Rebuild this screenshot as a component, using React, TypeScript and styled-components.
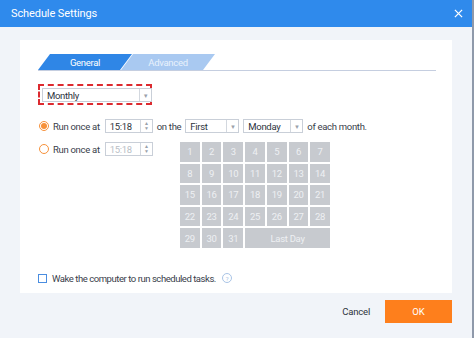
import styled, { createGlobalStyle } from "styled-components";

const GlobalStyle = createGlobalStyle`
  html, body {
    margin: 0;
    padding: 0;
    background: #ffffff;
  }
  body {
    font-family: Roboto, "Liberation Sans", sans-serif;
    font-size: 9.5px;
    letter-spacing: -0.3px;
    color: #333a44;
  }
`;

const Window = styled.div`
  width: 472px;
  height: 338px;
  border-right: 2px solid #8f99aa;
  background: #f1f4f9;
  display: flex;
  flex-direction: column;
`;

const TitleBar = styled.div`
  height: 27px;
  flex-shrink: 0;
  background: #2f8aec;
  color: #ffffff;
  display: flex;
  align-items: center;
  justify-content: space-between;
  padding: 0 9px 0 11px;
  font-size: 11px;
  letter-spacing: -0.1px;
`;

const CloseIcon = styled.svg`
  width: 9px;
  height: 9px;
`;

const Body = styled.div`
  padding: 13px 20px 0 20px;
`;

const Panel = styled.div`
  background: #ffffff;
  height: 253px;
  box-sizing: border-box;
  padding: 14px 16px 0 18px;
  display: flex;
  flex-direction: column;
`;

const TabRow = styled.div`
  display: flex;
  height: 16px;
  border-bottom: 1px solid #c5cee0;
`;

const Tab = styled.div<{ $active?: boolean }>`
  width: 94px;
  height: 16px;
  margin-left: ${({ $active }) => ($active ? "0" : "-11px")};
  clip-path: polygon(12px 0, 100% 0, calc(100% - 12px) 100%, 0 100%);
  background: ${({ $active }) => ($active ? "#2f86e6" : "#a9c9f1")};
  color: ${({ $active }) => ($active ? "#ffffff" : "#e8f1fc")};
  display: flex;
  align-items: center;
  justify-content: center;
  font-size: 9.5px;
`;

const DashedBox = styled.div`
  margin-top: 13px;
  width: 114px;
  height: 21px;
  box-sizing: border-box;
  border: 2px dashed #dc2a2f;
  padding: 2px;
`;

const Select = styled.div<{ $width: number; $disabled?: boolean }>`
  width: ${({ $width }) => $width}px;
  height: 14px;
  box-sizing: border-box;
  border: 1px solid #c9cfd8;
  background: #ffffff;
  display: flex;
  align-items: center;
  color: ${({ $disabled }) => ($disabled ? "#b9bec6" : "#2d333c")};
`;

const SelectText = styled.span`
  flex: 1;
  padding-left: 4px;
  white-space: nowrap;
`;

const Arrow = styled.span`
  width: 11px;
  height: 100%;
  border-left: 1px solid #d3d8df;
  display: flex;
  align-items: center;
  justify-content: center;
  color: #9aa1ab;
  font-size: 6px;
`;

const Spinner = styled.span`
  width: 11px;
  height: 100%;
  border-left: 1px solid #d3d8df;
  display: flex;
  flex-direction: column;
  align-items: center;
  justify-content: center;
  color: #9aa1ab;
  font-size: 5px;
  line-height: 5px;
`;

const OptionRow = styled.div`
  display: flex;
  align-items: center;
  gap: 4px;
  height: 14px;
`;

const FirstRow = styled(OptionRow)`
  margin-top: 14px;
`;

const Radio = styled.span<{ $checked?: boolean }>`
  width: 10px;
  height: 10px;
  box-sizing: border-box;
  border-radius: 50%;
  border: 1px solid #f7913a;
  margin-left: 1px;
  display: flex;
  align-items: center;
  justify-content: center;
  &::after {
    content: "";
    width: 6px;
    height: 6px;
    border-radius: 50%;
    background: ${({ $checked }) => ($checked ? "#f7913a" : "transparent")};
  }
`;

const Label = styled.span`
  white-space: nowrap;
  color: #39404a;
`;

const RadioLabel = styled(Label)`
  margin-right: 1px;
`;

const WakeLabel = styled(Label)`
  letter-spacing: -0.45px;
`;

const LowerArea = styled.div`
  display: flex;
  margin-top: 9px;
`;

const LeftCol = styled.div`
  width: 142px;
`;

const Calendar = styled.div`
  width: 150px;
  display: grid;
  grid-template-columns: repeat(7, 1fr);
  grid-auto-rows: 19.6px;
  gap: 2px;
`;

const Day = styled.div<{ $span?: number }>`
  grid-column: span ${({ $span }) => $span ?? 1};
  background: #c7cacf;
  color: #eef0f3;
  display: flex;
  align-items: center;
  justify-content: center;
  font-size: 9.5px;
`;

const WakeRow = styled.div`
  margin-top: 25px;
  display: flex;
  align-items: center;
  gap: 4px;
`;

const Checkbox = styled.span`
  width: 9px;
  height: 9px;
  box-sizing: border-box;
  border: 1px solid #4a8de0;
  margin-right: 1px;
`;

const HelpIcon = styled.span`
  width: 8px;
  height: 8px;
  border-radius: 50%;
  border: 1px solid #a9c4e6;
  color: #a9c4e6;
  font-size: 6px;
  display: flex;
  align-items: center;
  justify-content: center;
  margin-left: 2px;
`;

const Footer = styled.div`
  display: flex;
  justify-content: flex-end;
  align-items: center;
  padding: 7px 20px 0 0;
  gap: 15px;
`;

const CancelButton = styled.button`
  border: none;
  background: transparent;
  font: inherit;
  font-size: 9.5px;
  letter-spacing: -0.2px;
  color: #2d333c;
  padding: 0;
  cursor: pointer;
`;

const OkButton = styled.button`
  width: 67px;
  height: 23px;
  border: none;
  background: #fe7f1c;
  color: #ffffff;
  font: inherit;
  font-size: 9.5px;
  cursor: pointer;
`;

const days = Array.from({ length: 31 }, (_, i) => i + 1);

export default function App() {
  return (
    <>
      <GlobalStyle />
      <Window>
        <TitleBar>
          <span>Schedule Settings</span>
          <CloseIcon viewBox="0 0 10 10">
            <path d="M1 1 L9 9 M9 1 L1 9" stroke="#ffffff" strokeWidth="1.4" />
          </CloseIcon>
        </TitleBar>
        <Body>
          <Panel>
            <TabRow>
              <Tab $active>General</Tab>
              <Tab>Advanced</Tab>
            </TabRow>
            <DashedBox>
              <Select $width={110}>
                <SelectText>Monthly</SelectText>
                <Arrow>▼</Arrow>
              </Select>
            </DashedBox>
            <FirstRow>
              <Radio $checked />
              <RadioLabel>Run once at</RadioLabel>
              <Select $width={48}>
                <SelectText>15:18</SelectText>
                <Spinner>
                  <span>▲</span>
                  <span>▼</span>
                </Spinner>
              </Select>
              <Label>on the</Label>
              <Select $width={54}>
                <SelectText>First</SelectText>
                <Arrow>▼</Arrow>
              </Select>
              <Select $width={60}>
                <SelectText>Monday</SelectText>
                <Arrow>▼</Arrow>
              </Select>
              <Label>of each month.</Label>
            </FirstRow>
            <LowerArea>
              <LeftCol>
                <OptionRow>
                  <Radio />
                  <RadioLabel>Run once at</RadioLabel>
                  <Select $width={48} $disabled>
                    <SelectText>15:18</SelectText>
                    <Spinner>
                      <span>▲</span>
                      <span>▼</span>
                    </Spinner>
                  </Select>
                </OptionRow>
              </LeftCol>
              <Calendar>
                {days.map((d) => (
                  <Day key={d}>{d}</Day>
                ))}
                <Day $span={4}>Last Day</Day>
              </Calendar>
            </LowerArea>
            <WakeRow>
              <Checkbox />
              <WakeLabel>Wake the computer to run scheduled tasks.</WakeLabel>
              <HelpIcon>?</HelpIcon>
            </WakeRow>
          </Panel>
        </Body>
        <Footer>
          <CancelButton>Cancel</CancelButton>
          <OkButton>OK</OkButton>
        </Footer>
      </Window>
    </>
  );
}
